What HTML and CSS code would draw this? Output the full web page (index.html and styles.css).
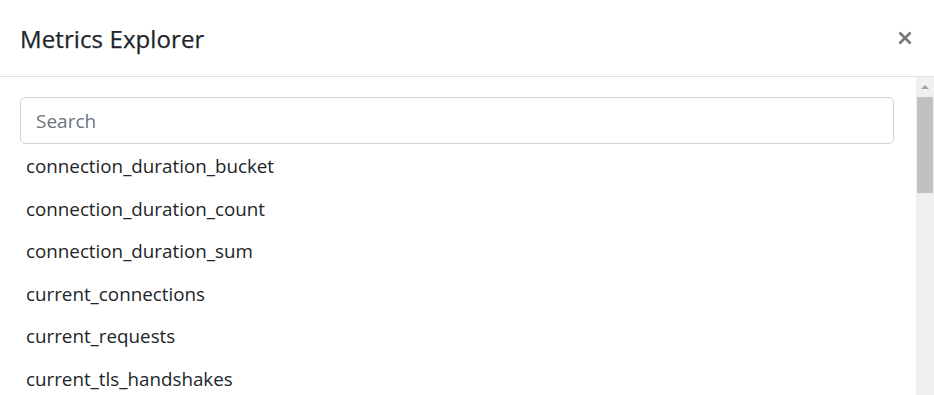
FILE: index.html
```html
<!DOCTYPE html>
<html>
<head>
<meta charset="utf-8">
<link rel="stylesheet" href="styles.css">
</head>
<body>
<div class="modal">
  <div class="modal-header">
    <h5 class="modal-title">Metrics Explorer</h5>
    <button class="close" aria-label="Close">
      <svg width="14" height="14" viewBox="0 0 14 14"><path d="M1.5 1.5 L12.5 12.5 M12.5 1.5 L1.5 12.5" stroke="#777" stroke-width="2.6" stroke-linecap="butt"/></svg>
    </button>
  </div>
  <div class="modal-body">
    <div class="content">
      <input class="search" type="text" placeholder="Search">
      <ul class="metrics">
        <li>connection_duration_bucket</li>
        <li>connection_duration_count</li>
        <li>connection_duration_sum</li>
        <li>current_connections</li>
        <li>current_requests</li>
        <li>current_tls_handshakes</li>
      </ul>
    </div>
    <div class="scrollbar">
      <div class="arrow-up"></div>
      <div class="thumb"></div>
    </div>
  </div>
</div>
</body>
</html>
```
FILE: styles.css
```css
html, body {
  margin: 0;
  padding: 0;
  background: #fff;
  overflow: hidden;
}
body {
  font-family: "Open Sans", "Noto Sans", sans-serif;
  color: #212529;
}
.modal {
  width: 934px;
  height: 395px;
  display: flex;
  flex-direction: column;
}
.modal-header {
  height: 76px;
  border-bottom: 1px solid #dee2e6;
  display: flex;
  align-items: center;
  justify-content: space-between;
  padding: 0 22px 0 20px;
  flex-shrink: 0;
}
.modal-title {
  margin: 0;
  font-size: 24px;
  font-weight: 500;
  letter-spacing: 0.1px;
  color: #212529;
  -webkit-text-stroke: 0.25px #212529;
}
.close {
  border: 0;
  background: none;
  padding: 0;
  margin: 0;
  display: flex;
}
.modal-body {
  flex: 1;
  display: flex;
  min-height: 0;
}
.content {
  flex: 1;
  padding: 20px 22px 0 20px;
  overflow: hidden;
}
.search {
  box-sizing: border-box;
  display: block;
  width: 100%;
  height: 47px;
  border: 1px solid #ced4da;
  border-radius: 5px;
  padding: 0 15px;
  font-family: inherit;
  font-size: 19px;
  color: #495057;
  outline: none;
}
.search::placeholder {
  color: #6c757d;
}
.metrics {
  list-style: none;
  margin: 0;
  padding: 0 0 0 6px;
  font-size: 18.8px;
  color: #212529;
}
.metrics li {
  height: 42.5px;
  line-height: 44px;
}
.scrollbar {
  width: 18px;
  flex-shrink: 0;
  background: #f0f0f0;
  display: flex;
  flex-direction: column;
  align-items: center;
}
.arrow-up {
  width: 0;
  height: 0;
  border-left: 4px solid transparent;
  border-right: 4px solid transparent;
  border-bottom: 4px solid #a3a3a3;
  margin-top: 8px;
  margin-bottom: 8px;
}
.thumb {
  width: 16px;
  height: 96px;
  background: #c1c1c1;
}
```
